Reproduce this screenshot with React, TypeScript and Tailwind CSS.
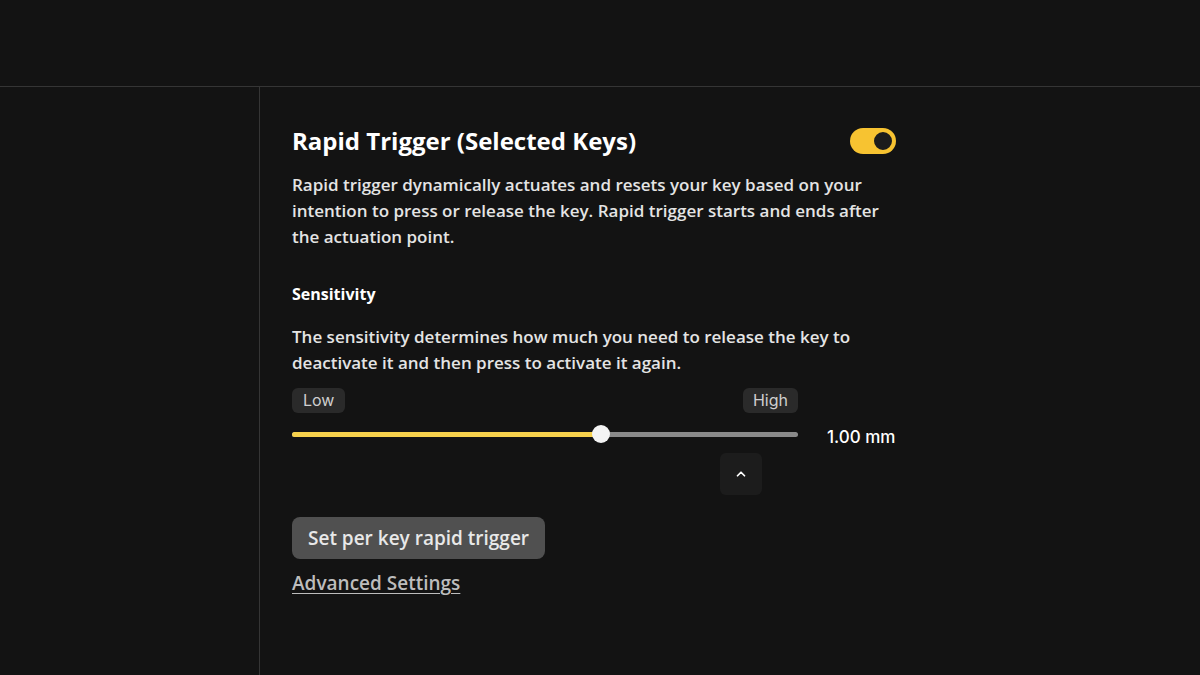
import { ChevronUp } from "lucide-react";

export default function App() {
  return (
    <div className="h-[675px] w-[1200px] overflow-hidden bg-[#131313] flex flex-col" style={{ fontFamily: "'Open Sans', sans-serif" }}>
      {/* top bar */}
      <div className="h-[87px] shrink-0 border-b border-[#353535]" />

      <div className="flex flex-1">
        {/* sidebar */}
        <div className="w-[260px] shrink-0 border-r border-[#353535]" />

        {/* content */}
        <div className="pl-[32px] pt-[38px]">
          <div className="w-[604px]">
            <div className="flex items-center justify-between">
              <h1 className="text-[24px] leading-[32px] font-bold text-white">Rapid Trigger (Selected Keys)</h1>
              <div className="w-[46px] h-[26px] rounded-full bg-[#f7c331] flex items-center justify-end pr-[2px]">
                <div className="w-[22px] h-[22px] rounded-full bg-[#1c1c1c] border-2 border-[#f7c331]" />
              </div>
            </div>

            <p className="mt-[15px] text-[17px] leading-[26px] font-semibold text-[#e4e4e4]">
              Rapid trigger dynamically actuates and resets your key based on your intention to press or release the key. Rapid trigger starts and ends after the actuation point.
            </p>

            <h2 className="mt-[31px] text-[16px] leading-[26px] font-bold text-white">Sensitivity</h2>

            <p className="mt-[17px] text-[17px] leading-[26px] font-semibold text-[#e4e4e4] pr-[30px]">
              The sensitivity determines how much you need to release the key to deactivate it and then press to activate it again.
            </p>

            {/* slider */}
            <div className="mt-[12px] flex items-start gap-[27px]" style={{ fontFamily: "Inter, sans-serif" }}>
              <div className="w-[506px]">
                <div className="flex justify-between">
                  <span className="h-[25px] px-[11px] rounded-md bg-[#2a2a2a] text-[#cfcfcf] text-[16px] leading-[25px]">Low</span>
                  <span className="h-[25px] px-[10px] rounded-md bg-[#2a2a2a] text-[#cfcfcf] text-[16px] leading-[25px]">High</span>
                </div>
                <div className="relative mt-[12px] h-[18px] flex items-center">
                  <div className="h-[5px] w-full rounded-full bg-[#8a8a8a] overflow-hidden">
                    <div className="h-full bg-[#f7d14c]" style={{ width: "61%" }} />
                  </div>
                  <div className="absolute top-0 h-[18px] w-[18px] rounded-full bg-[#f4f4f4]" style={{ left: "calc(61% - 9px)" }} />
                </div>
                <div className="mt-[10px] flex justify-end pr-[36px]">
                  <div className="w-[42px] h-[42px] rounded-md bg-[#1c1c1c] flex items-center justify-center">
                    <ChevronUp className="w-[14px] h-[14px] text-white" strokeWidth={3} />
                  </div>
                </div>
              </div>
              <span className="mt-[38px] ml-[2px] text-[17px] leading-[22px] font-medium text-white">1.00 mm</span>
            </div>

            <button className="mt-[22px] h-[42px] px-[16px] rounded-lg bg-[#505050] text-[#e8e8e8] text-[19px] font-semibold">
              Set per key rapid trigger
            </button>

            <div className="mt-[10px]">
              <a className="text-[19px] leading-[28px] font-semibold text-[#bdbdbd] underline underline-offset-[3px]">Advanced Settings</a>
            </div>
          </div>
        </div>
      </div>
    </div>
  );
}
